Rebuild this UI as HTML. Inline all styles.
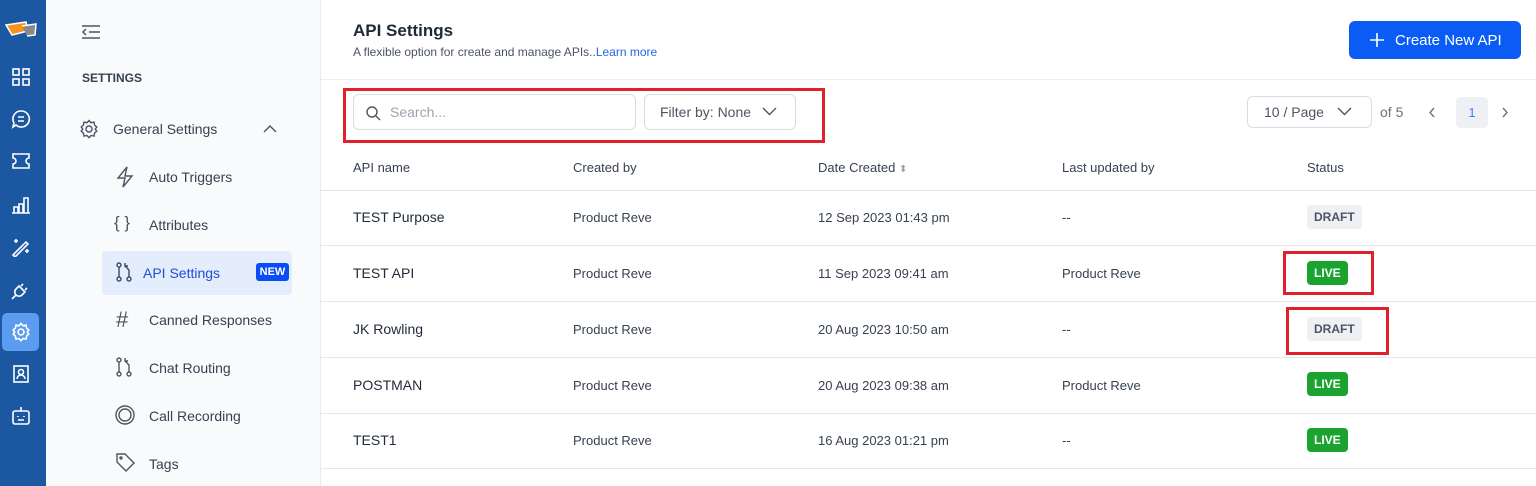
<!DOCTYPE html>
<html><head><meta charset="utf-8"><style>
*{box-sizing:border-box;margin:0;padding:0}
body{width:1536px;height:486px;overflow:hidden;font-family:"Liberation Sans",sans-serif;background:#fff;position:relative;color:#1f2937}
.rail{position:absolute;left:0;top:0;width:46px;height:486px;background:#1c57a2}
.rail svg{position:absolute;left:11px}
.side{position:absolute;left:46px;top:0;width:275px;height:486px;background:#f9fafb;border-right:1px solid #e8eaee}
.t{position:absolute;white-space:nowrap}
.mi{position:absolute;font-size:14px;color:#374151}
.ic{position:absolute}
.row{position:absolute;left:321px;right:0;border-bottom:1px solid #e5e7eb;height:56px}
.cell{position:absolute;font-size:13px;color:#374151;white-space:nowrap}
.badge{position:absolute;font-size:12px;font-weight:bold;padding:0 7px;height:24px;line-height:24px;border-radius:4px}
.draft{background:#eef0f3;color:#4b5563}
.live{background:#1aa32f;color:#fff}
.red{position:absolute;border:3px solid #e0202a}
</style></head><body>
<div class="rail">
<svg style="left:4px;top:20px" width="34" height="20" viewBox="0 0 34 20"><path d="M2 5l20-3 2 9-16 4z" fill="#f7931e" stroke="#fff" stroke-width="1.5"/><path d="M18 6l14-2-1 11-8 1" fill="#888" stroke="#fff" stroke-width="1.5"/></svg>
<svg style="top:67px" width="20" height="20" fill="none" stroke="#fff" stroke-width="1.6"><rect x="2" y="2" width="6" height="6"/><rect x="12" y="2" width="6" height="6"/><rect x="2" y="12" width="6" height="6"/><rect x="12" y="12" width="6" height="6"/></svg>
<svg style="top:109px" width="20" height="20" fill="none" stroke="#fff" stroke-width="1.6"><path d="M10 2a8 8 0 1 1-5 14l-3 2 1-4A8 8 0 0 1 10 2z"/><path d="M7 8h6M7 12h6"/></svg>
<svg style="top:151px" width="20" height="20" fill="none" stroke="#fff" stroke-width="1.6"><path d="M2 3h16v4a3 3 0 0 0 0 6v4H2v-4a3 3 0 0 0 0-6z"/></svg>
<svg style="top:195px" width="20" height="20" fill="none" stroke="#fff" stroke-width="1.6"><path d="M1 18h18M3 18v-6h4v6M8 18V9h4v9M13 18V3h4v15"/></svg>
<svg style="top:237px" width="20" height="20" fill="none" stroke="#fff" stroke-width="1.6"><path d="M2 18L15 5l2 2L4 20zM5 2v4M3 4h4M16 12v4M14 14h4"/></svg>
<svg style="top:280px" width="20" height="20" fill="none" stroke="#fff" stroke-width="1.6"><path d="M8 6l6 6-3 3a4 4 0 0 1-6-6zM12 4l-2 2M16 8l-2 2M5 15l-4 4"/></svg>
<div style="position:absolute;left:2px;top:313px;width:37px;height:38px;background:#5b9cf0;border-radius:5px"></div>
<svg style="top:322px" width="20" height="20" fill="none" stroke="#fff" stroke-width="1.6"><circle cx="10" cy="10" r="3"/><path d="M10 1.5l2 2.2 3-.6.6 3 2.2 2-1.6 2 1.6 2-2.2 2-.6 3-3-.6-2 2.2-2-2.2-3 .6-.6-3-2.2-2 1.6-2-1.6-2 2.2-2 .6-3 3 .6z"/></svg>
<svg style="top:364px" width="20" height="20" fill="none" stroke="#fff" stroke-width="1.6"><rect x="3" y="2" width="14" height="16"/><circle cx="10" cy="8" r="2.5"/><path d="M6 15a4 4 0 0 1 8 0"/></svg>
<svg style="top:406px" width="20" height="20" fill="none" stroke="#fff" stroke-width="1.6"><rect x="2" y="5" width="16" height="13" rx="2"/><path d="M10 1v4M7 10v1M13 10v1M7 14h6"/></svg>
</div>
<div class="side">
<svg class="ic" style="left:35px;top:24px" width="20" height="16" fill="none" stroke="#4b5563" stroke-width="1.5"><path d="M1 2h18M8 8h11M1 14h18M5 5L2 8l3 3"/></svg>
<div class="t" style="left:36px;top:71px;font-size:12px;font-weight:bold;color:#374151">SETTINGS</div>
<svg class="ic" style="left:33px;top:119px" width="20" height="20" fill="none" stroke="#4b5563" stroke-width="1.4"><circle cx="10" cy="10" r="3"/><path d="M10 1.5l2 2.2 3-.6.6 3 2.2 2-1.6 2 1.6 2-2.2 2-.6 3-3-.6-2 2.2-2-2.2-3 .6-.6-3-2.2-2 1.6-2-1.6-2 2.2-2 .6-3 3 .6z"/></svg>
<div class="mi" style="left:67px;top:121px">General Settings</div>
<svg class="ic" style="left:217px;top:125px" width="14" height="8" fill="none" stroke="#4b5563" stroke-width="1.4"><path d="M1 7l6-6 6 6"/></svg>
<svg class="ic" style="left:70px;top:166px" width="18" height="22" fill="none" stroke="#4b5563" stroke-width="1.4"><path d="M11 1L2 12h7l-2 9 9-11H9z"/></svg>
<div class="mi" style="left:103px;top:169px">Auto Triggers</div>
<div class="mi" style="left:68px;top:213px;font-size:17px;color:#4b5563">{ }</div>
<div class="mi" style="left:103px;top:217px">Attributes</div>
<div style="position:absolute;left:56px;top:251px;width:190px;height:44px;background:#e3edfb;border-radius:4px"></div>
<svg class="ic" style="left:69px;top:262px" width="18" height="20" fill="none" stroke="#3b4a6b" stroke-width="1.4"><circle cx="4" cy="3" r="2"/><circle cx="4" cy="17" r="2"/><circle cx="14" cy="17" r="2"/><path d="M4 5v10M14 15V8l-4-4M10 1v3h3"/></svg>
<div class="mi" style="left:97px;top:265px;color:#1d4ed8">API Settings</div>
<div style="position:absolute;left:210px;top:263px;width:33px;height:18px;background:#0b4df5;border-radius:3px;color:#fff;font-size:11px;font-weight:bold;line-height:18px;text-align:center">NEW</div>
<div class="mi" style="left:70px;top:307px;font-size:22px;color:#4b5563">#</div>
<div class="mi" style="left:103px;top:312px">Canned Responses</div>
<svg class="ic" style="left:69px;top:357px" width="18" height="20" fill="none" stroke="#4b5563" stroke-width="1.4"><circle cx="4" cy="3" r="2"/><circle cx="4" cy="17" r="2"/><circle cx="14" cy="17" r="2"/><path d="M4 5v10M14 15V8l-4-4M10 1v3h3"/></svg>
<div class="mi" style="left:103px;top:360px">Chat Routing</div>
<svg class="ic" style="left:69px;top:405px" width="20" height="20" fill="none" stroke="#4b5563" stroke-width="1.4"><circle cx="10" cy="10" r="9"/><circle cx="10" cy="10" r="6"/></svg>
<div class="mi" style="left:103px;top:408px">Call Recording</div>
<svg class="ic" style="left:69px;top:452px" width="20" height="20" fill="none" stroke="#4b5563" stroke-width="1.4"><path d="M2 2h8l9 9-8 8-9-9z"/><circle cx="6" cy="6" r="1"/></svg>
<div class="mi" style="left:103px;top:456px">Tags</div>
</div>

<div class="t" style="left:353px;top:21px;font-size:17px;font-weight:bold;color:#1f2937">API Settings</div>
<div class="t" style="left:353px;top:45px;font-size:12px;color:#4b5563">A flexible option for create and manage APIs..<span style="color:#2563eb">Learn more</span></div>
<div style="position:absolute;left:1349px;top:21px;width:172px;height:38px;background:#0b5cf5;border-radius:6px;color:#fff;font-size:15px;line-height:38px;padding-left:46px;padding-top:1px">Create New API</div>
<svg class="ic" style="left:1369px;top:32px" width="16" height="16" stroke="#fff" stroke-width="1.6"><path d="M8 1v14M1 8h14"/></svg>
<div style="position:absolute;left:321px;right:0;top:79px;border-top:1px solid #eceef1"></div>

<div style="position:absolute;left:353px;top:94px;width:283px;height:36px;border:1px solid #d9dce1;border-radius:6px"></div>
<svg class="ic" style="left:365px;top:105px" width="16" height="16" fill="none" stroke="#4b5563" stroke-width="1.4"><circle cx="7" cy="7" r="5"/><path d="M11 11l4 4"/></svg>
<div class="t" style="left:390px;top:104px;font-size:14px;color:#9ca3af">Search...</div>
<div style="position:absolute;left:644px;top:94px;width:152px;height:36px;border:1px solid #d9dce1;border-radius:6px;font-size:14px;color:#4b5563;line-height:34px;padding-left:15px">Filter by: None</div>
<svg class="ic" style="left:762px;top:107px" width="15" height="9" fill="none" stroke="#4b5563" stroke-width="1.4"><path d="M1 1l6.5 6.5L14 1"/></svg>
<div class="red" style="left:343px;top:88px;width:482px;height:55px"></div>

<div style="position:absolute;left:1247px;top:96px;width:125px;height:32px;border:1px solid #d9dce1;border-radius:6px;font-size:14px;color:#4b5563;line-height:30px;padding-left:16px">10 / Page</div>
<svg class="ic" style="left:1337px;top:107px" width="15" height="9" fill="none" stroke="#4b5563" stroke-width="1.4"><path d="M1 1l6.5 6.5L14 1"/></svg>
<div class="t" style="left:1380px;top:104px;font-size:14px;color:#6b7280">of 5</div>
<svg class="ic" style="left:1428px;top:107px" width="8" height="11" fill="none" stroke="#6b7280" stroke-width="1.4"><path d="M6 1L2 5.5 6 10"/></svg>
<div style="position:absolute;left:1456px;top:97px;width:32px;height:31px;background:#eef0f3;border-radius:5px;color:#3b82f6;font-size:13px;text-align:center;line-height:31px">1</div>
<svg class="ic" style="left:1501px;top:107px" width="8" height="11" fill="none" stroke="#6b7280" stroke-width="1.4"><path d="M2 1l4 4.5L2 10"/></svg>

<div class="row" style="top:134px;height:57px;border-bottom:1px solid #dfe3ea"></div>
<div class="cell" style="left:353px;top:160px">API name</div>
<div class="cell" style="left:573px;top:160px">Created by</div>
<div class="cell" style="left:818px;top:160px">Date Created <span style="color:#9ca3af;font-size:10px">⬍</span></div>
<div class="cell" style="left:1062px;top:160px">Last updated by</div>
<div class="cell" style="left:1307px;top:160px">Status</div>

<div class="row" style="top:190px"></div>
<div class="row" style="top:246px"></div>
<div class="row" style="top:302px"></div>
<div class="row" style="top:358px"></div>
<div class="row" style="top:413px"></div>

<div class="cell" style="left:353px;top:209px;font-size:14px;color:#1f2937">TEST Purpose</div>
<div class="cell" style="left:573px;top:210px">Product Reve</div>
<div class="cell" style="left:818px;top:210px">12 Sep 2023 01:43 pm</div>
<div class="cell" style="left:1062px;top:210px">--</div>
<div class="badge draft" style="left:1307px;top:205px">DRAFT</div>

<div class="cell" style="left:353px;top:265px;font-size:14px;color:#1f2937">TEST API</div>
<div class="cell" style="left:573px;top:266px">Product Reve</div>
<div class="cell" style="left:818px;top:266px">11 Sep 2023 09:41 am</div>
<div class="cell" style="left:1062px;top:266px">Product Reve</div>
<div class="badge live" style="left:1307px;top:261px">LIVE</div>
<div class="red" style="left:1283px;top:251px;width:91px;height:44px"></div>

<div class="cell" style="left:353px;top:321px;font-size:14px;color:#1f2937">JK Rowling</div>
<div class="cell" style="left:573px;top:322px">Product Reve</div>
<div class="cell" style="left:818px;top:322px">20 Aug 2023 10:50 am</div>
<div class="cell" style="left:1062px;top:322px">--</div>
<div class="badge draft" style="left:1307px;top:317px">DRAFT</div>
<div class="red" style="left:1286px;top:307px;width:103px;height:48px"></div>

<div class="cell" style="left:353px;top:377px;font-size:14px;color:#1f2937">POSTMAN</div>
<div class="cell" style="left:573px;top:378px">Product Reve</div>
<div class="cell" style="left:818px;top:378px">20 Aug 2023 09:38 am</div>
<div class="cell" style="left:1062px;top:378px">Product Reve</div>
<div class="badge live" style="left:1307px;top:372px">LIVE</div>

<div class="cell" style="left:353px;top:432px;font-size:14px;color:#1f2937">TEST1</div>
<div class="cell" style="left:573px;top:433px">Product Reve</div>
<div class="cell" style="left:818px;top:433px">16 Aug 2023 01:21 pm</div>
<div class="cell" style="left:1062px;top:433px">--</div>
<div class="badge live" style="left:1307px;top:428px">LIVE</div>
</body></html>
